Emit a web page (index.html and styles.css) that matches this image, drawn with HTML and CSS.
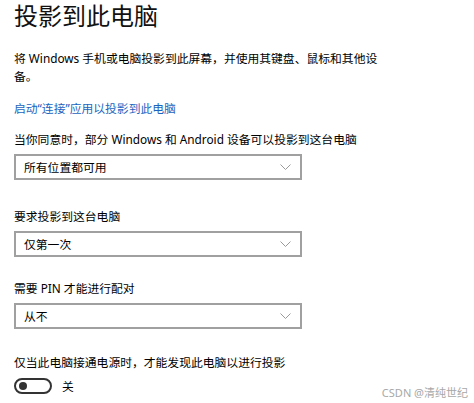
FILE: index.html
```html
<!DOCTYPE html>
<html lang="zh-CN">

<head>
    <meta charset="UTF-8">
    <meta name="viewport" content="width=device-width, initial-scale=1.0">
    <title>投影到此电脑</title>
    <link rel="stylesheet" href="styles.css">
</head>

<body>

    <div class="page">
        <!-- Page heading -->
        <h1 class="title">投影到此电脑</h1>

        <p class="desc">将 Windows 手机或电脑投影到此屏幕，并使用其键盘、鼠标和其他设备。</p>

        <a class="link" href="#">启动“连接”应用以投影到此电脑</a>

        <!-- Settings -->
        <div class="field first">
            <div class="label">当你同意时，部分 Windows 和 Android 设备可以投影到这台电脑</div>
            <div class="select">
                <span>所有位置都可用</span>
                <svg class="chevron" width="11" height="7" viewBox="0 0 11 7"><polyline points="0.5,0.5 5.5,5.5 10.5,0.5" /></svg>
            </div>
        </div>

        <div class="field second">
            <div class="label">要求投影到这台电脑</div>
            <div class="select">
                <span>仅第一次</span>
                <svg class="chevron" width="11" height="7" viewBox="0 0 11 7"><polyline points="0.5,0.5 5.5,5.5 10.5,0.5" /></svg>
            </div>
        </div>

        <div class="field third">
            <div class="label">需要 PIN 才能进行配对</div>
            <div class="select">
                <span>从不</span>
                <svg class="chevron" width="11" height="7" viewBox="0 0 11 7"><polyline points="0.5,0.5 5.5,5.5 10.5,0.5" /></svg>
            </div>
        </div>

        <div class="field fourth">
            <div class="label">仅当此电脑接通电源时，才能发现此电脑以进行投影</div>
            <div class="toggle-row">
                <span class="toggle"><span class="knob"></span></span>
                <span class="toggle-text">关</span>
            </div>
        </div>
    </div>

    <!-- Watermark -->
    <div class="watermark">CSDN @清纯世纪</div>

</body>

</html>
```

FILE: styles.css
```css
/* Reset */
* {
    margin: 0;
    padding: 0;
    box-sizing: border-box;
}

body {
    width: 474px;
    height: 403px;
    background: #fff;
    color: #000;
    font-family: "Noto Sans", "Noto Sans CJK SC", sans-serif;
    font-size: 11.8px;
    line-height: 18px;
    position: relative;
    overflow: hidden;
}

.page {
    display: flex;
    flex-direction: column;
    align-items: flex-start;
    padding: 0 14px;
}

/* Heading */
.title {
    font-size: 24px;
    line-height: 32px;
    font-weight: 400;
    color: #111;
}

.desc {
    margin-top: 17px;
    max-width: 372px;
}

.link {
    margin-top: 14px;
    color: #1a64c0;
    text-decoration: none;
}

/* Fields */
.field {
    display: flex;
    flex-direction: column;
    gap: 6px;
}

.field.first {
    margin-top: 13px;
}

.field.second {
    margin-top: 27px;
}

.field.third {
    margin-top: 22px;
}

.field.fourth {
    margin-top: 24px;
    gap: 6px;
}

/* Dropdown box */
.select {
    width: 288px;
    height: 26px;
    border: 2px solid #a0a0a0;
    display: flex;
    align-items: center;
    justify-content: space-between;
    padding: 0 9px 0 8px;
}

.chevron polyline {
    fill: none;
    stroke: #9a9a9a;
    stroke-width: 1;
}

/* Toggle switch */
.toggle-row {
    display: flex;
    align-items: center;
    gap: 10px;
}

.toggle {
    width: 38px;
    height: 16px;
    border: 2px solid #333;
    border-radius: 8px;
    display: flex;
    align-items: center;
    padding-left: 3px;
}

.knob {
    width: 8px;
    height: 8px;
    border-radius: 50%;
    background: #333;
}

/* Watermark in the corner */
.watermark {
    position: absolute;
    right: 6px;
    bottom: 3px;
    font-size: 11px;
    line-height: 14px;
    color: #a8a8a8;
}
```
